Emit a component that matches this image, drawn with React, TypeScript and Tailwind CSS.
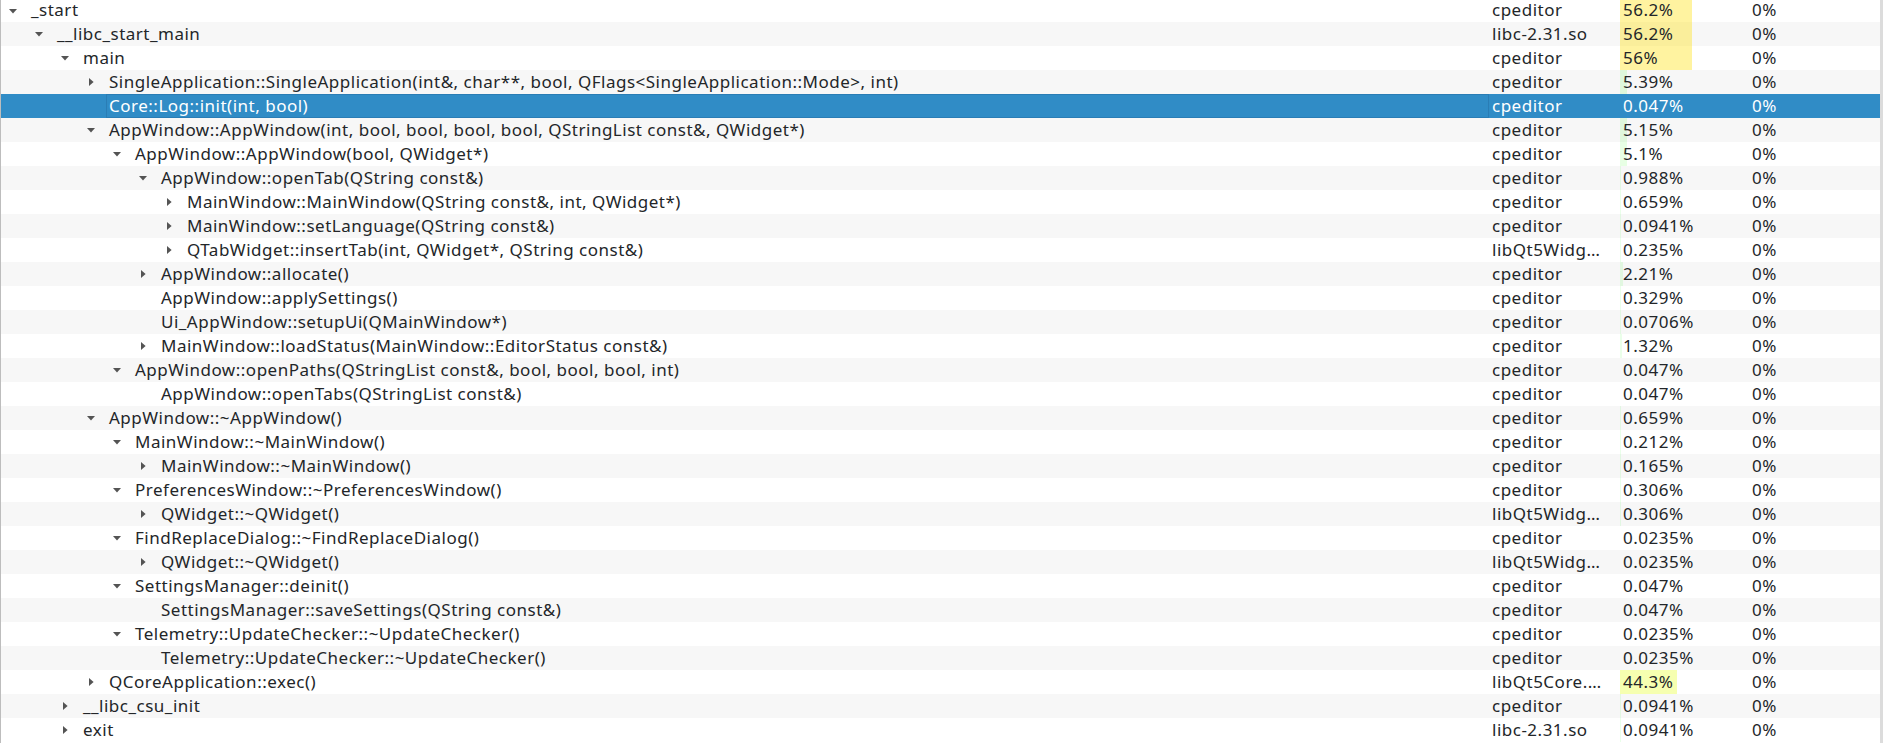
import React from "react";

type Row = [string, number, "d" | "r" | "", string, string, number];

const rows: Row[] = [
  ["_start", 0, "d", "cpeditor", "56.2%", 56.2],
  ["__libc_start_main", 1, "d", "libc-2.31.so", "56.2%", 56.2],
  ["main", 2, "d", "cpeditor", "56%", 56],
  ["SingleApplication::SingleApplication(int&, char**, bool, QFlags<SingleApplication::Mode>, int)", 3, "r", "cpeditor", "5.39%", 5.39],
  ["Core::Log::init(int, bool)", 3, "", "cpeditor", "0.047%", 0.047],
  ["AppWindow::AppWindow(int, bool, bool, bool, bool, QStringList const&, QWidget*)", 3, "d", "cpeditor", "5.15%", 5.15],
  ["AppWindow::AppWindow(bool, QWidget*)", 4, "d", "cpeditor", "5.1%", 5.1],
  ["AppWindow::openTab(QString const&)", 5, "d", "cpeditor", "0.988%", 0.988],
  ["MainWindow::MainWindow(QString const&, int, QWidget*)", 6, "r", "cpeditor", "0.659%", 0.659],
  ["MainWindow::setLanguage(QString const&)", 6, "r", "cpeditor", "0.0941%", 0.0941],
  ["QTabWidget::insertTab(int, QWidget*, QString const&)", 6, "r", "libQt5Widg…", "0.235%", 0.235],
  ["AppWindow::allocate()", 5, "r", "cpeditor", "2.21%", 2.21],
  ["AppWindow::applySettings()", 5, "", "cpeditor", "0.329%", 0.329],
  ["Ui_AppWindow::setupUi(QMainWindow*)", 5, "", "cpeditor", "0.0706%", 0.0706],
  ["MainWindow::loadStatus(MainWindow::EditorStatus const&)", 5, "r", "cpeditor", "1.32%", 1.32],
  ["AppWindow::openPaths(QStringList const&, bool, bool, bool, int)", 4, "d", "cpeditor", "0.047%", 0.047],
  ["AppWindow::openTabs(QStringList const&)", 5, "", "cpeditor", "0.047%", 0.047],
  ["AppWindow::~AppWindow()", 3, "d", "cpeditor", "0.659%", 0.659],
  ["MainWindow::~MainWindow()", 4, "d", "cpeditor", "0.212%", 0.212],
  ["MainWindow::~MainWindow()", 5, "r", "cpeditor", "0.165%", 0.165],
  ["PreferencesWindow::~PreferencesWindow()", 4, "d", "cpeditor", "0.306%", 0.306],
  ["QWidget::~QWidget()", 5, "r", "libQt5Widg…", "0.306%", 0.306],
  ["FindReplaceDialog::~FindReplaceDialog()", 4, "d", "cpeditor", "0.0235%", 0.0235],
  ["QWidget::~QWidget()", 5, "r", "libQt5Widg…", "0.0235%", 0.0235],
  ["SettingsManager::deinit()", 4, "d", "cpeditor", "0.047%", 0.047],
  ["SettingsManager::saveSettings(QString const&)", 5, "", "cpeditor", "0.047%", 0.047],
  ["Telemetry::UpdateChecker::~UpdateChecker()", 4, "d", "cpeditor", "0.0235%", 0.0235],
  ["Telemetry::UpdateChecker::~UpdateChecker()", 5, "", "cpeditor", "0.0235%", 0.0235],
  ["QCoreApplication::exec()", 3, "r", "libQt5Core.…", "44.3%", 44.3],
  ["__libc_csu_init", 2, "r", "cpeditor", "0.0941%", 0.0941],
  ["exit", 2, "r", "libc-2.31.so", "0.0941%", 0.0941],
];

function barColor(pct: number) {
  const f = pct / 100;
  const hue = 120 - f * 120;
  const alpha = 0.08 + f * 0.52;
  return `hsla(${hue}, 100%, 50%, ${alpha})`;
}

function Arrow({ kind }: { kind: "d" | "r" | "" }) {
  if (kind === "d")
    return (
      <svg width="8" height="5" viewBox="0 0 8 5">
        <polygon points="0,0 8,0 4,4.6" fill="#545454" />
      </svg>
    );
  if (kind === "r")
    return (
      <svg width="5" height="8" viewBox="0 0 5 8">
        <polygon points="0,0 4.6,4 0,8" fill="#545454" />
      </svg>
    );
  return null;
}

export default function App() {
  return (
    <div
      className="w-[1883px] h-[743px] overflow-hidden bg-white border-l border-l-[#bdbdbd] border-r-[3px] border-r-[#dcdcdc] text-[17px] tracking-[0.5px] text-[#232629]"
      style={{ fontFamily: '"Noto Sans", "Open Sans", sans-serif' }}
    >
      <div className="flex flex-col">
        {rows.map(([name, level, arrow, mod, pctText, pct], i) => {
          const selected = i === 4;
          const rowBg = selected
            ? "bg-[#308cc6] text-white"
            : i % 2 === 1
            ? "bg-[#f7f7f7]"
            : "bg-white";
          const rowH = i === 0 ? "h-[22px] leading-[20px]" : "h-[24px] leading-[24px]";
          return (
            <div key={i} className={`flex whitespace-nowrap ${rowH} ${rowBg}`}>
              <div className="w-[1488px] shrink-0 flex items-stretch">
                <div className="shrink-0" style={{ width: level * 26 }} />
                <div className="w-[24px] shrink-0 flex items-center justify-center">
                  <Arrow kind={arrow} />
                </div>
                {selected ? (
                  <div className="flex-1 ml-[3px] pl-[2px] border border-[#2a7db5] leading-[22px] overflow-hidden">
                    {name}
                  </div>
                ) : (
                  <div className="flex-1 ml-[3px] pl-[3px] overflow-hidden">{name}</div>
                )}
              </div>
              <div className="w-[131px] shrink-0 pl-[3px] overflow-hidden">{mod}</div>
              <div className="w-[129px] shrink-0 relative">
                {!selected && (
                  <div
                    className="absolute left-0 top-0 bottom-0"
                    style={{ width: (pct / 100) * 129, background: barColor(pct) }}
                  />
                )}
                <span className="relative pl-[3px]">{pctText}</span>
              </div>
              <div className="flex-1 pl-[3px]">0%</div>
            </div>
          );
        })}
      </div>
    </div>
  );
}
